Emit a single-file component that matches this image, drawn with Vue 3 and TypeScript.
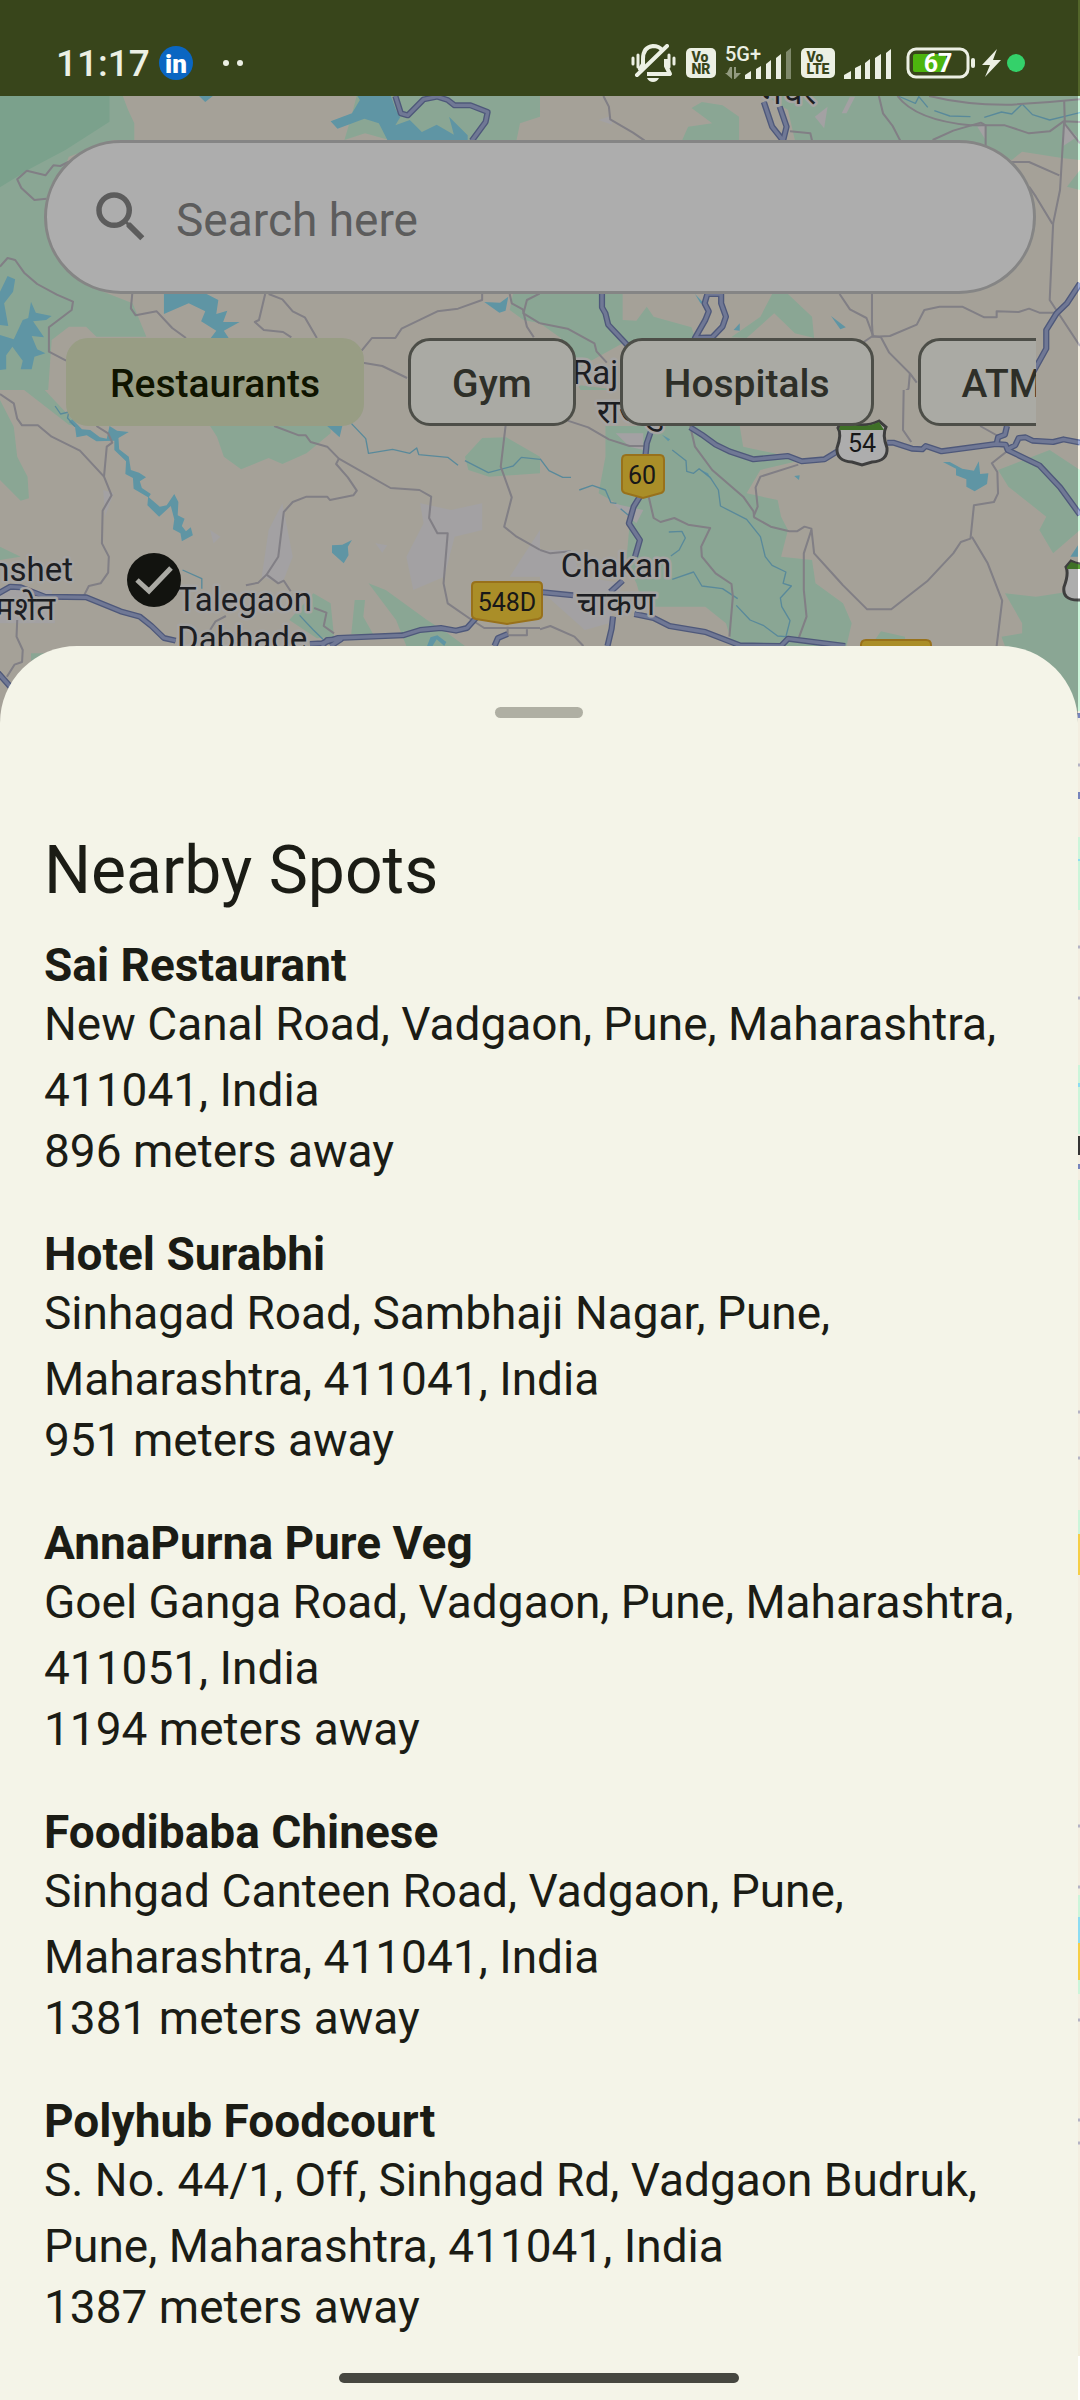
<script setup lang="ts">
import { ref } from 'vue'

interface Spot {
  name: string
  address: string
  meters: number
}

interface Tile {
  x: number
  y: number
  height: number
  parks: string[]
  forest: string[]
  urban: string[]
  water: string[]
  rivers: string[]
  roads: string[]
  highways: string[]
}

const query = ref('')
const categories = ['Restaurants', 'Gym', 'Hospitals', 'ATM']
const selected = ref('Restaurants')

const spots: Spot[] = [
  { name: 'Sai Restaurant', address: 'New Canal Road, Vadgaon, Pune, Maharashtra, 411041, India', meters: 896 },
  { name: 'Hotel Surabhi', address: 'Sinhagad Road, Sambhaji Nagar, Pune, Maharashtra, 411041, India', meters: 951 },
  { name: 'AnnaPurna Pure Veg', address: 'Goel Ganga Road, Vadgaon, Pune, Maharashtra, 411051, India', meters: 1194 },
  { name: 'Foodibaba Chinese', address: 'Sinhgad Canteen Road, Vadgaon, Pune, Maharashtra, 411041, India', meters: 1381 },
  { name: 'Polyhub Foodcourt', address: 'S. No. 44/1, Off, Sinhgad Rd, Vadgaon Budruk, Pune, Maharashtra, 411041, India', meters: 1387 },
]

// Map tiles: each covers 540 units of width and is drawn on its own 1568-wide grid.
const tiles: Tile[] = [
  {
    x: 0, y: 90, height: 300,
    parks: [
      'M0 0H350L372 60L390 100V150H330L200 200L140 350L240 570L300 605L385 640L425 740H330L280 740L250 710H200L150 750L140 900H0Z',
      'M1040 0H1568V80L1510 100L1500 150H1130L1060 130L1000 150L1020 80Z',
      'M1568 610H1490L1480 660L1520 690L1568 700Z',
    ],
    forest: ['M0 0H318V95L190 180L90 235L0 292Z'],
    urban: [],
    water: [
      'M578 18H618L596 36Z',
      'M960 94L1022 70L1045 30L1038 18H1135L1150 60L1162 82L1148 106L1190 90L1225 126L1268 104L1318 134L1304 80L1358 136V152H1126L1100 100L1058 86L980 116Z',
      'M476 612H600L634 630L628 672L660 662L648 696L696 696L650 722L664 744H612L628 722L584 694L596 664L548 640L476 672Z',
      'M0 605L22 558L44 568L38 605L12 640L24 708L0 705Z',
      'M0 735L40 748L66 690L82 684L90 635L104 668L150 678L134 690L96 694L128 742L92 738L108 778L132 790L100 800L92 838L60 838L66 812L36 770L18 796V838L0 840Z',
      'M1406 636L1452 638L1476 620L1468 662L1450 668Z',
    ],
    rivers: [],
    roads: [
      'M200 215L175 228L155 226L132 256L78 242L50 268L62 294L100 330L135 326',
      'M0 530L22 504L44 510L70 548L108 582L165 614L212 635L208 660L142 712V785L192 812',
      'M384 612L380 655L394 676L455 664L500 714L540 744',
      'M770 612L752 690L740 696L766 720L822 726L846 742',
      'M780 612L820 628L850 664L885 682L920 744',
      'M1050 782L1080 744H1148L1166 716L1270 664L1330 656L1400 630V612',
      'M1054 818L1110 828L1182 864',
      'M1480 612L1486 640L1518 658L1530 710L1550 742',
      'M1568 700L1520 670L1530 630L1568 610',
    ],
    highways: ['M1148 18L1164 70L1184 76L1230 28L1270 20L1300 30L1320 46H1366L1416 66L1410 96L1370 152'],
  },
  {
    x: 540, y: 90, height: 300,
    parks: [
      'M440 54L470 36L530 46L578 80V152H412L430 110L500 100Z',
      'M630 0H1568V210L1520 205L1400 185L1370 210L1290 170L1200 150H740L720 60Z',
      'M0 612H240V690L280 692L310 650L330 680L440 712L450 744L240 760L100 840L60 744L0 700Z',
      'M555 742L640 680L674 612H720L790 680L796 744L740 730L680 670L600 744Z',
      'M1530 290L1568 240V300Z',
      'M110 885L230 900V960H150Z',
    ],
    forest: [],
    urban: ['M798 80L835 50L825 115Z', 'M890 70L915 20H900L876 70Z', 'M1270 110L1294 106V150Z', 'M1520 100L1560 140L1516 170Z', 'M170 90L205 78L210 104Z'],
    water: ['M562 720L580 700V722Z', 'M845 678L888 712L872 718Z', 'M450 612L480 644L466 640Z'],
    rivers: ['M1040 18L1090 40L1100 20L1126 52', 'M1145 62L1190 78L1250 80', 'M1290 82L1340 66L1370 72L1400 42L1430 74L1480 90L1568 68'],
    roads: [
      'M184 18L200 50L204 88L270 128L304 152',
      'M726 124L785 130L790 152',
      'M984 18L996 70L1024 108L1046 152',
      'M1038 18Q1090 90 1250 106L1350 106L1420 130L1480 124L1520 94L1568 96',
      'M1130 18Q1240 46 1370 44L1480 36L1568 28',
      'M1522 30L1524 102L1568 160',
      'M1140 150L1200 122L1280 98L1294 106V170',
      'M1522 94L1510 300L1490 400L1480 630L1568 768',
      'M1370 216L1420 216L1508 256',
      'M1420 290L1440 320L1488 402',
      'M0 700L80 716L158 760L164 784L194 818',
      'M870 612L900 658L948 684L968 740',
      'M964 612V700L966 740L1016 738L1094 704L1116 660L1160 650H1226L1290 682H1326V664L1390 666L1420 656L1450 668H1500',
      'M940 756L966 738L990 742L1014 788L1074 850L1094 878',
      'M1074 850L1070 896L1052 912V960',
    ],
    highways: [
      'M650 36L674 110L706 152L716 110L696 50',
      'M180 612V652L190 670L198 704L256 768',
      'M486 612L478 640L490 664L480 690L450 744L500 742L530 710L540 680L526 640V612Z',
      'M1568 580L1530 640L1500 670L1470 720V776L1430 850',
    ],
  },
  {
    x: 0, y: 390, height: 300,
    parks: [
      'M0 30L40 110L50 200L80 260L84 325L60 332L0 270Z',
      'M70 0H130L230 110L200 104Z',
      'M610 108H960V130L890 190L820 222L780 204L700 238L650 200L630 140Z',
      'M1350 200L1400 144L1470 142L1568 200V250L1420 260L1360 240Z',
      'M0 470L60 500L0 510Z',
      'M1070 580L1120 600L1240 690L1300 730L1350 768H1180L1150 690Z',
      'M1030 630H1060L1055 680L1085 735L1020 732Z',
      'M840 690L910 610L960 640L970 740L920 745Z',
      'M90 790H150L90 812Z',
    ],
    forest: [],
    urban: [
      'M780 420L820 340L850 500L820 580L760 560Z',
      'M1180 500L1230 400L1220 340L1310 360L1400 340V420L1320 440L1290 560L1200 600Z',
      'M0 600L150 600L160 700H0Z', 'M1480 560L1568 420V560Z', 'M610 420L640 440L620 460Z',
      'M1090 460L1124 466L1110 488Z', 'M300 300L330 310L305 380Z',
    ],
    water: [
      'M318 108L340 122L374 126L344 144L346 178L374 200L380 240L404 248L424 262L406 274L412 294L438 312L432 322L464 350L484 346L506 312L518 336L516 376L536 386L528 408L540 424L554 412L560 436L528 454L524 430L502 418L506 388L496 348L462 380L428 346L430 322L388 296L386 264L364 252L366 214L332 180V152L280 154L252 136L222 142L218 112L200 96L210 88L238 118L262 120L290 142L310 146Z',
      'M950 108H994L986 142Z',
      'M964 488V466L994 464L1022 450L1010 470L1012 496L998 520Z',
      'M1240 768L1250 742L1270 736L1296 756L1290 768L1268 748L1256 768Z',
    ],
    rivers: [
      'M160 48L176 72L200 66L196 84L218 110',
      'M1020 100L1062 146L1070 190L1140 178L1190 190L1210 174L1216 194L1300 202L1330 226',
      'M1350 212L1418 248L1490 228L1514 202L1568 208',
      'M530 540L586 566V596',
      'M870 676L910 720L940 750',
    ],
    roads: [
      'M0 12L40 40L50 86L64 106H110L150 140L232 182L302 260L324 316L298 362L296 460L316 500L314 548L292 580L258 588L244 616',
      'M280 108L314 130L326 158L310 170L302 260',
      'M796 108L868 136L888 136L902 156L950 170L984 206L1134 294L1218 300L1252 320L1246 384L1270 430H1300L1288 580L1300 640L1370 690L1406 714H1568',
      'M984 206L976 222L1010 262L1036 302L1026 316L958 330L950 320H890L850 336L824 366L808 500L774 554L750 578L714 586',
      'M774 554L808 580L824 572L844 604',
      'M1468 108L1454 230L1486 322L1464 410L1500 440L1568 480',
      'M912 654L948 668L940 708L970 730',
      'M50 690L48 740L66 780L64 816L42 824L20 860',
      'M610 720L626 694L656 678', 'M1474 710V736H1530V718',
    ],
    highways: [
      'M-8 612L30 590L60 592L130 620L250 622L350 664L406 680L440 708L476 744L510 752',
      'M900 762L935 760L980 744L1170 736L1220 720L1280 714L1324 722L1356 714L1382 684',
      'M935 768L950 750L990 748L960 768',
      'M1436 768L1446 744L1474 732',
      'M-8 846L30 890',
    ],
  },
  {
    x: 540, y: 390, height: 320,
    parks: [
      'M190 108H580L590 170L680 190L740 215L640 240L600 310L690 330L700 380L720 420L700 500L790 510L800 580L880 640L905 700L890 768H560L540 700L480 650H300L280 580L250 520L262 380L240 350L170 310L190 200Z',
      'M1330 240L1480 180L1568 240V420L1490 490L1450 420L1470 380L1360 290Z',
      'M1350 610L1440 620L1568 600V1000L1540 960L1440 800L1350 768L1340 740L1400 730V700Z',
      'M960 768L990 724L1060 740V768Z',
    ],
    forest: [],
    urban: ['M0 480L90 480L120 560L240 580L200 700L130 720L0 600Z', 'M220 130H300V180L260 170Z', 'M210 340L300 360L280 400Z'],
    water: [
      'M1170 216H1190L1226 236L1260 242L1274 214L1278 252L1302 250L1298 282L1262 304L1238 290V268L1208 256V236Z',
      'M354 134L378 148L372 154Z', 'M738 258L754 256L752 270Z', 'M1540 500L1562 466V500Z',
      'M460 236L488 250L496 268Z',
    ],
    rivers: [
      'M0 206L26 242L66 262H90', 'M114 300L152 286L190 300L206 338L222 340', 'M234 356L262 380',
      'M384 180L424 212L426 244L446 250L462 236L494 262L518 300L524 348L600 388L640 440L654 500L674 526L714 546L706 580L730 588L698 624L702 650L726 692L714 740L690 738L648 706L610 690L570 646',
      'M374 426L412 424L422 444L404 480L380 498',
      'M384 568L446 546L470 588L530 596L574 626',
    ],
    roads: [
      'M80 92L140 112L200 148L260 168H310',
      'M436 108L450 170L500 240L590 320L620 364L622 382L670 410L724 424H746L768 410L788 416L796 490L866 570L880 586L950 658H1020L1124 574L1200 490L1222 456L1250 446L1260 346L1318 336L1330 310L1328 246L1312 220L1356 184',
      'M750 224L640 260L626 292L632 350L620 380',
      'M316 322L330 384L350 396L390 384L430 404L494 414L468 470L470 500L510 550L556 582L560 620L550 740',
      'M788 420L766 490V600L774 680L752 742',
      'M1254 440L1300 520L1342 632L1326 768',
      'M1056 0L1054 120L1078 156',
      'M0 480L30 490L90 484', 'M0 718L30 708L100 740L126 768',
      'M1278 108L1330 138',
    ],
    highways: [
      'M324 118L310 160L306 200',
      'M290 320L272 350L258 400L290 450L276 500',
      'M436 112L470 134L510 164L550 184L620 208L720 198L760 214L826 208L864 184',
      'M1008 158H1026L1080 176L1110 178L1120 168L1166 184L1324 162L1352 164L1358 180L1450 226L1510 292L1568 374',
      'M1326 160L1330 142L1350 134L1356 108',
      'M1360 176L1380 166L1390 144L1410 142L1430 152L1490 156L1520 148L1568 158',
      'M0 606L96 616', 'M240 572L204 606', 'M212 680L208 716L196 768',
      'M274 672L330 684L376 708L480 726L580 766L700 768L720 746L886 768',
    ],
  },
]
</script>

<template>
  <main class="screen">
    <svg class="map" viewBox="0 0 1080 2400" preserveAspectRatio="xMinYMin slice" aria-hidden="true">
      <rect width="1080" height="2400" fill="#f3eee1" />
      <svg
        v-for="tile in tiles"
        :key="`${tile.x}-${tile.y}`"
        :x="tile.x"
        :y="tile.y"
        width="540"
        :height="tile.height"
        :viewBox="`0 0 1568 ${tile.height * 3}`"
        preserveAspectRatio="none"
      >
        <path v-for="d in tile.parks" :key="d" :d="d" class="park" />
        <path v-for="d in tile.forest" :key="d" :d="d" class="forest" />
        <path v-for="d in tile.urban" :key="d" :d="d" class="urban" />
        <path v-for="d in tile.water" :key="d" :d="d" class="water" />
        <path v-for="d in tile.rivers" :key="d" :d="d" class="river" />
        <path v-for="d in tile.roads" :key="d" :d="d" class="road" />
        <path v-for="d in tile.highways" :key="d" :d="d" class="highway-edge" />
        <path v-for="d in tile.highways" :key="d" :d="d" class="highway" />
      </svg>

      <g class="place">
        <text x="762" y="104">मंचर</text>
        <text x="572" y="384">Raj</text>
        <text x="597" y="423">राजगुरु</text>
        <text x="73" y="581" text-anchor="end">Kamshet</text>
        <text x="55" y="620" text-anchor="end">कामशेत</text>
        <text x="177" y="611">Talegaon</text>
        <text x="177" y="650">Dabhade</text>
        <text x="616" y="577" text-anchor="middle">Chakan</text>
        <text x="616" y="615" text-anchor="middle">चाकण</text>
      </g>

      <g class="shield">
        <path d="M626 455H660Q664 455 664 460V489Q664 492 661 493L643 498L625 493Q622 492 622 489V460Q622 455 626 455Z" />
        <path d="M476 582H538Q542 582 542 586V615Q542 618 538 619L507 624L476 619Q472 618 472 615V586Q472 582 476 582Z" />
        <path d="M866 640H926Q931 640 931 645V682H861V645Q861 640 866 640Z" />
      </g>
      <g class="route">
        <path d="M840 424L845 421Q862 429 879 421L886 427Q882 434 887 448Q888 461 872 462L862 465L852 462Q836 461 837 448Q842 434 838 428Z" />
        <path class="route-cap" d="M840 426L845 422Q862 430 879 422L884 430H839Z" />
        <path d="M1066 567L1071 561Q1088 569 1105 561L1112 567Q1108 574 1113 588Q1114 600 1098 600H1078Q1062 600 1064 587Q1069 574 1066 567Z" />
        <path class="route-cap" d="M1067 567L1071 562L1084 566V569H1067Z" />
      </g>
      <g class="shield-label">
        <text x="642" y="484">60</text>
        <text x="507" y="611">548D</text>
        <text x="862" y="452">54</text>
      </g>
      <circle cx="154" cy="580" r="27" fill="#1b1c17" />
      <path d="M137 580L149 591L171 568" fill="none" stroke="#fbfbf2" stroke-width="5" />

      <!-- Map features along the right edge of the lower half -->
      <path d="M1070 640H1080V711H1070ZM1070 837H1080V910H1070ZM1070 1065H1080V1134H1070ZM1070 1180H1080V1220H1070ZM1070 1510H1080V1534H1070ZM1070 1895H1080V1917H1070ZM1070 1980H1080V1994H1070Z" class="park" />
      <path d="M1070 1917H1080V1943H1070ZM1070 859H1080V861H1070ZM1070 1083H1080V1087H1070Z" class="water" />
      <path d="M1070 1534H1080V1575H1070ZM1070 1943H1080V1980H1070Z" fill="#f6ce46" />
      <path d="M1070 713H1080V718H1070ZM1070 792H1080V799H1070ZM1070 1164H1080V1169H1070Z" fill="#7684bc" />
      <path d="M1070 1136H1080V1155H1070Z" fill="#333" />
      <path d="M1070 765H1080M1070 947H1080M1070 998H1080M1070 1412H1080M1070 1458H1080M1070 1826H1080M1070 1887H1080M1070 2020H1080M1070 2120H1080M1070 2143H1080" stroke="#b5b3c4" stroke-width="3" />
      <rect x="1070" y="2356" width="10" height="44" fill="#fff" />
    </svg>

    <header class="status">
      <div class="status-left">
        <time>11:17</time>
        <svg width="34" height="34" viewBox="0 0 34 34" aria-label="LinkedIn">
          <circle cx="17" cy="17" r="17" fill="#0a66c2" />
          <text x="17" y="27" class="in" text-anchor="middle">in</text>
        </svg>
        <svg class="dots" width="20" height="8" viewBox="0 0 20 8" aria-hidden="true">
          <circle cx="3" cy="4" r="3" /><circle cx="17" cy="4" r="3" />
        </svg>
      </div>
      <div class="status-right">
        <svg width="46" height="38" viewBox="0 0 46 38" aria-label="Silent">
          <path d="M12 20V15Q12 3 22 2Q28 2 31 6M35 15V22L39 30H16" fill="none" stroke="#ecf0e4" stroke-width="4" stroke-linejoin="round" />
          <path d="M6 31L36 2M12 20L9 25" fill="none" stroke="#ecf0e4" stroke-width="4" stroke-linecap="round" />
          <path d="M16 34H28Q26 38 22 38T16 34Z" />
          <path d="M2 14V20M7 11V23M38 11V23M43 14V20" fill="none" stroke="#ecf0e4" stroke-width="3" stroke-linecap="round" />
        </svg>
        <svg width="30" height="30" viewBox="0 0 30 30" aria-label="VoNR">
          <rect width="30" height="30" rx="5" />
          <text x="14" y="14" class="tag">Vo</text>
          <text x="15" y="26" class="tag">NR</text>
        </svg>
        <svg width="67" height="34" viewBox="0 0 67 34" aria-label="5G+ signal">
          <text x="0" y="15" class="net">5G+</text>
          <path d="M0 27H2L5 21H7V33ZM9 21H11V27H16L10 33H9Z" opacity=".5" />
          <path d="M20 33V29L26 25V33ZM31 33V23L36 20V33ZM41 33V18L46 14V33ZM51 33V12L56 8V33Z" />
          <path d="M61 33V6L66 2V33Z" opacity=".4" />
        </svg>
        <svg width="34" height="30" viewBox="0 0 34 30" aria-label="VoLTE">
          <rect width="34" height="30" rx="5" />
          <text x="14" y="14" class="tag">Vo</text>
          <text x="17" y="26" class="tag">LTE</text>
        </svg>
        <svg width="48" height="34" viewBox="0 0 48 34" aria-label="Signal">
          <path d="M0 33V29L7 25V33ZM11 33V22L17 19V33ZM21 33V17L26 13V33ZM31 33V12L37 8V33ZM42 33V7L47 3V33Z" />
        </svg>
        <svg width="124" height="34" viewBox="0 0 124 34" aria-label="Battery 67 percent, charging">
          <rect x="7" y="3" width="60" height="28" rx="8" fill="none" stroke="#ecf0e4" stroke-width="3" />
          <rect x="12" y="8" width="33" height="18" rx="2" fill="#4db50e" />
          <rect x="70" y="12" width="4" height="10" rx="2" />
          <text x="37" y="26" class="charge">67</text>
          <path d="M96 3L81 19H89L84 31L100 14H92Z" />
          <circle cx="115" cy="17" r="9" fill="#34d16a" />
        </svg>
      </div>
    </header>

    <section class="controls">
      <label class="search">
        <svg width="66" height="66" viewBox="0 0 24 24" aria-hidden="true">
          <path fill="#888" d="M15.5 14h-.79l-.28-.27A6.47 6.47 0 0 0 16 9.500 6.500 6.500 0 1 0 9.500 16c1.610 0 3.090-.59 4.230-1.570l.27.28v.79l5 4.990L20.490 19zM9.500 14a4.500 4.500 0 1 1 0-9 4.500 4.500 0 0 1 0 9z" />
        </svg>
        <input v-model="query" type="text" placeholder="Search here" aria-label="Search here" />
      </label>
      <nav class="chips" aria-label="Categories">
        <button
          v-for="category in categories"
          :key="category"
          type="button"
          class="chip"
          :class="{ selected: category === selected }"
          @click="selected = category"
        >
          {{ category }}
        </button>
      </nav>
    </section>

    <div class="scrim"></div>

    <section class="sheet" aria-labelledby="sheet-title">
      <div class="handle"></div>
      <h1 id="sheet-title">Nearby Spots</h1>
      <ul class="spots">
        <li v-for="spot in spots" :key="spot.name">
          <h2>{{ spot.name }}</h2>
          <p class="address">{{ spot.address }}</p>
          <p class="distance">{{ spot.meters }} meters away</p>
        </li>
      </ul>
      <div class="home-bar"></div>
    </section>
  </main>
</template>

<style>
body {
  margin: 0;
}
</style>

<style scoped>
.screen {
  position: relative;
  display: flex;
  flex-direction: column;
  min-height: 100vh;
  overflow: hidden;
  font-family: Roboto, 'Noto Sans', sans-serif;
  color: #1b1c15;
}

.map {
  position: absolute;
  inset: 0;
  width: 100%;
  height: 100%;
}

.park { fill: #ccf5da; }
.forest { fill: #b5eecf; }
.urban { fill: #f0edf0; }
.water { fill: #8cdcf2; }

.river,
.road,
.highway,
.highway-edge {
  fill: none;
  stroke-linejoin: round;
}

.river { stroke: #84cbe4; stroke-width: 4; }
.road { stroke: #bfbbc4; stroke-width: 6; }
.highway-edge { stroke: #7482b4; stroke-width: 18; }
.highway { stroke: #a5b2dc; stroke-width: 10; }

.place {
  font-size: 33px;
  fill: #2b2d33;
  stroke: #f4f2f0;
  stroke-width: 5px;
  stroke-linejoin: round;
  paint-order: stroke;
}

.shield { fill: #fbd13c; stroke: #e0a728; stroke-width: 2px; }
.route { fill: #fff; stroke: #5c5c5c; stroke-width: 3px; }
.route-cap { fill: #5da63a; stroke: none; }
.shield-label { font-size: 25px; fill: #242424; text-anchor: middle; }

.status {
  position: relative;
  z-index: 2;
  display: flex;
  justify-content: space-between;
  box-sizing: border-box;
  height: 96px;
  padding: 30px 53px 0 56px;
  background: #38451b;
  border-right: 2px solid #53662a;
  color: #ecf0e4;
}

.status-left,
.status-right {
  display: flex;
  align-items: center;
  gap: 9px;
}

.status time {
  padding-top: 2px;
  font-size: 37px;
  font-weight: 500;
  line-height: 44px;
}

.status svg { fill: #ecf0e4; }
.status .dots { margin-left: 21px; }
.status .in { font-size: 26px; font-weight: 900; fill: #fff; }
.tag { font-size: 14px; font-weight: 900; fill: #38451b; text-anchor: middle; }
.net { font-size: 20px; font-weight: 500; }
.charge { font-size: 25px; font-weight: 700; fill: #fff; text-anchor: middle; }

.controls {
  position: relative;
  padding: 44px 44px 220px;
}

.search {
  display: flex;
  align-items: center;
  gap: 22px;
  box-sizing: border-box;
  height: 154px;
  padding: 0 41px;
  border: 3px solid #c5c5c5;
  border-radius: 77px;
  background: #fff;
}

.search input {
  flex: 1;
  min-width: 0;
  padding: 6px 0 0;
  border: 0;
  outline: 0;
  background: transparent;
  font: 400 46px / 66px Roboto, sans-serif;
  color: #1b1c15;
}

.search input::placeholder {
  color: #888;
  opacity: 1;
}

.chips {
  display: flex;
  gap: 44px;
  margin-top: 44px;
  padding-left: 22px;
  overflow: hidden;
}

.chip {
  flex: none;
  box-sizing: border-box;
  height: 88px;
  padding: 3px 41px 0;
  border: 3px solid #72746a;
  border-radius: 22px;
  background: #fbfbf2;
  font: 500 39px / 52px Roboto, sans-serif;
  color: #44463c;
}

.chip.selected {
  border-color: #e0e7c3;
  background: #e0e7c3;
  color: #171e00;
}

.scrim {
  position: absolute;
  inset: 0 2px 0 0;
  height: 800px;
  background: rgba(0, 0, 0, 0.32);
}

.sheet {
  position: relative;
  z-index: 1;
  flex: 1;
  display: flex;
  flex-direction: column;
  margin-right: 2px;
  padding: 61px 44px 17px;
  border-radius: 77px 77px 0 0;
  background: #f4f4e8;
}

.handle {
  align-self: center;
  width: 88px;
  height: 11px;
  border-radius: 6px;
  background: #afafa3;
}

h1 {
  margin: 109px 0 24px;
  font-size: 66px;
  font-weight: 400;
  line-height: 88px;
}

.spots {
  display: flex;
  flex-direction: column;
  gap: 49px;
  margin: 0;
  padding: 0;
  list-style: none;
}

.spots h2,
.spots p {
  margin: 0;
  font-size: 46px;
}

.spots h2 {
  font-weight: 700;
  line-height: 52px;
}

.spots .address { line-height: 66px; }
.spots .distance { line-height: 56px; }

.home-bar {
  align-self: center;
  width: 400px;
  height: 10px;
  margin-top: auto;
  border-radius: 5px;
  background: #464740;
}
</style>
